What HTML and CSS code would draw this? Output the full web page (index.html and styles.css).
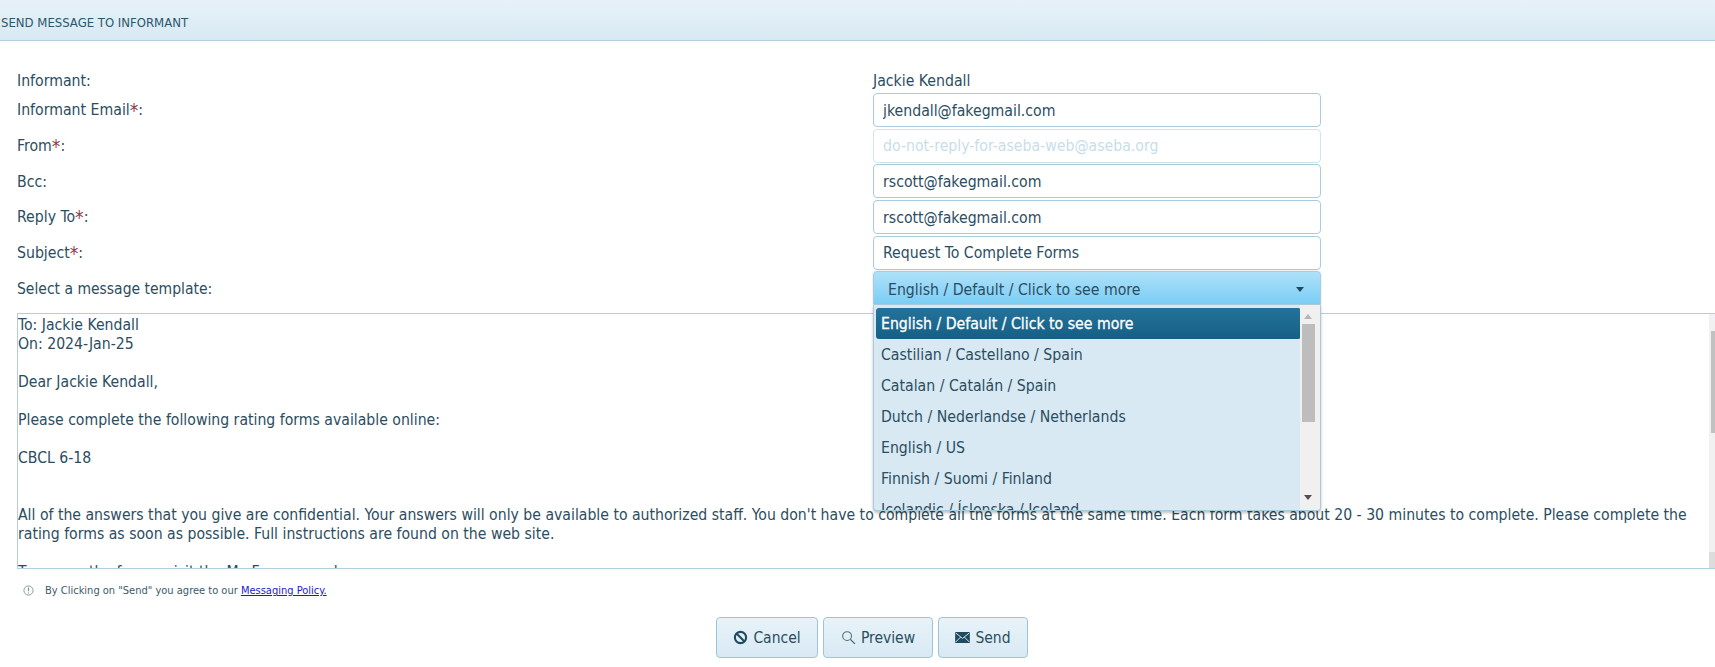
FILE: index.html
```html
<!DOCTYPE html>
<html lang="en">
<head>
<meta charset="utf-8">
<title>Send message to informant</title>
<link rel="stylesheet" href="styles.css">
</head>
<body>
<header class="titlebar">SEND MESSAGE TO INFORMANT</header>
<main class="content">
  <form class="fields">
    <div class="row row-static"><label class="lbl">Informant:</label><span class="val">Jackie Kendall</span></div>
    <div class="row"><label class="lbl">Informant Email<b>*</b>:</label><input class="inp" value="jkendall@fakegmail.com"></div>
    <div class="row"><label class="lbl">From<b>*</b>:</label><input class="inp inp-off" value="do-not-reply-for-aseba-web@aseba.org" readonly></div>
    <div class="row"><label class="lbl">Bcc:</label><input class="inp" value="rscott@fakegmail.com"></div>
    <div class="row"><label class="lbl">Reply To<b>*</b>:</label><input class="inp" value="rscott@fakegmail.com"></div>
    <div class="row"><label class="lbl">Subject<b>*</b>:</label><input class="inp" value="Request To Complete Forms"></div>
    <div class="row row-select"><label class="lbl lbl-select">Select a message template:</label>
      <div class="select">
        <div class="select-btn"><span>English / Default / Click to see more</span><i class="caret"></i></div>
        <div class="menu">
          <ul class="opts">
            <li class="opt opt-on">English / Default / Click to see more</li>
            <li class="opt">Castilian / Castellano / Spain</li>
            <li class="opt">Catalan / Catalán / Spain</li>
            <li class="opt">Dutch / Nederlandse / Netherlands</li>
            <li class="opt">English / US</li>
            <li class="opt">Finnish / Suomi / Finland</li>
            <li class="opt">Icelandic / Íslenska / Iceland</li>
          </ul>
          <div class="menu-bar"><i class="up"></i><i class="menu-thumb"></i><i class="down"></i></div>
        </div>
      </div>
    </div>
  </form>
  <div class="message">
    <div class="message-text">To: Jackie Kendall
On: 2024-Jan-25

Dear Jackie Kendall,

Please complete the following rating forms available online:

CBCL 6-18


All of the answers that you give are confidential. Your answers will only be available to authorized staff. You don't have to complete all the forms at the same time. Each form takes about 20 - 30 minutes to complete. Please complete the rating forms as soon as possible. Full instructions are found on the web site.

To access the forms, visit the My Forms panel:</div>
    <div class="message-bar"><i class="message-thumb"></i><i class="message-end"></i></div>
  </div>
  <p class="note">
    <svg class="note-ico" viewBox="0 0 12 12" width="11" height="11"><circle cx="6" cy="6" r="5" fill="none" stroke="#7f929c" stroke-width="1"/><path d="M6 2.8v4M6 8.2v1.200" stroke="#7f929c" stroke-width="1.3"/></svg>
    <span>By Clicking on "Send" you agree to our <a href="#">Messaging Policy.</a></span>
  </p>
  <div class="actions">
    <button type="button" class="btn btn-cancel"><svg viewBox="0 0 16 16" width="15" height="15"><circle cx="8" cy="8" r="6" fill="none" stroke="#1f4a60" stroke-width="2.2"/><path d="M3.8 3.8l8.4 8.4" stroke="#1f4a60" stroke-width="2.2"/></svg>Cancel</button>
    <button type="button" class="btn btn-preview"><svg viewBox="0 0 16 16" width="15" height="15"><circle cx="6.500" cy="6.500" r="4.700" fill="none" stroke="#4d6b7b" stroke-width="1.1"/><path d="M10 10l4.800 4.800" stroke="#4d6b7b" stroke-width="1.5"/></svg>Preview</button>
    <button type="button" class="btn btn-send"><svg viewBox="0 0 16 12" width="15" height="11"><rect width="16" height="12" fill="#1f4a60"/><path d="M0.500 1l7.500 6 7.500-6M0.500 11l5.500-5.500M15.500 11L10 5.500" fill="none" stroke="#e4f0f6" stroke-width="1"/></svg>Send</button>
  </div>
</main>
</body>
</html>
```

FILE: styles.css
```css
* { box-sizing: border-box; }
html, body { margin: 0; padding: 0; height: 667px; overflow: hidden; background: #fff; }
body {
  font-family: "DejaVu Sans Condensed", "DejaVu Sans", sans-serif;
  font-size: 15.7px;
  color: #2b4d5f;
}
.titlebar {
  height: 41px;
  padding: 15px 0 0 1px;
  font-size: 13px;
  line-height: 16px;
  color: #2b566d;
  background: linear-gradient(#e6f2f8, #d8e9f3);
  border-bottom: 1px solid #b5cfde;
}
.content { display: block; }
.fields { padding: 28px 0 0 17px; display: flex; flex-direction: column; }
.row {
  display: grid;
  grid-template-columns: 856px 448px;
  align-items: center;
  height: 34px;
  margin-bottom: 1.7px;
}
.row-static { height: 22px; margin-bottom: 2px; }
.row-select { margin-bottom: 0; }
.lbl { display: block; }
.lbl-select { padding-top: 2px; font-size: 15.5px; }
.lbl b { font-weight: normal; font-size: 19px; line-height: 1; vertical-align: -2px; color: #8b3b4b; }
.val { display: block; }
.inp {
  display: block;
  width: 448px;
  height: 34px;
  padding: 0 9px;
  font: inherit;
  color: #2b4d5f;
  background: #fff;
  border: 1px solid #a9cbdc;
  border-radius: 4px;
  outline: none;
}
.inp-off { color: #c7deea; border-color: #d3e4ed; }
.select { position: relative; width: 448px; height: 34px; }
.select-btn {
  height: 34px;
  padding: 2px 15px 0 14px;
  display: flex;
  align-items: center;
  justify-content: space-between;
  background: linear-gradient(#aee1f9, #7bcdf5);
  border: 1px solid #a9cbdc;
  border-radius: 4px 4px 0 0;
  box-shadow: 0 0 2px rgba(0, 0, 0, .2);
}
.caret { width: 0; height: 0; border: 4px solid transparent; border-top: 5px solid #1f4a60; border-bottom: 0; margin-right: 1px; }
.menu {
  position: absolute;
  top: 34px;
  left: 0;
  z-index: 3;
  width: 448px;
  height: 206px;
  display: flex;
  overflow: hidden;
  background: #d8e9f3;
  border: 1px solid #a9cbdc;
  border-top: 0;
  border-radius: 0 0 4px 4px;
  box-shadow: 0 2px 3px rgba(0, 0, 0, .25);
}
.opts { list-style: none; margin: 0; padding: 3px 0 0 2px; flex: 1; min-width: 0; }
.opt { height: 31px; line-height: 31px; padding-left: 5px; width: 425px; }
.opt-on {
  color: #fff;
  font-weight: 400;
  -webkit-text-stroke: .3px #fff;
  background: linear-gradient(#24739b, #155f84);
  border-radius: 3px;
}
.menu-bar {
  width: 20px;
  background: #f0f0f0;
  display: flex;
  flex-direction: column;
  align-items: center;
  padding: 0 4px 0 0;
  position: relative;
}
.up { margin-top: 9px; border: 4px solid transparent; border-bottom: 5px solid #b5b5b5; border-top: 0; }
.menu-thumb { display: block; width: 13px; height: 98px; margin-top: 5px; background: #bdbdbd; }
.down { margin-top: auto; margin-bottom: 10px; border: 4px solid transparent; border-top: 5px solid #505050; border-bottom: 0; }
.message {
  margin: 8px 0 0 17px;
  height: 256px;
  display: flex;
  overflow: hidden;
  border: solid #b5cfde;
  border-width: 1px 0 1px 1px;
}
.message-text {
  flex: 1;
  min-width: 0;
  padding: 1px 16px 0 0;
  white-space: pre-wrap;
  font-size: 15.65px;
  line-height: 19px;
  color: #2b4d5f;
}
.message-bar {
  flex: none;
  width: 6px;
  background: #f1f1f1;
  display: flex;
  flex-direction: column;
  padding: 17px 0 0 2px;
}
.message-thumb { display: block; height: 102px; background: #c1c1c1; }
.message-end { display: block; height: 16px; margin: auto 0 0 -2px; background: #dcdcdc; }
.note {
  margin: 0;
  height: 43px;
  padding: 14px 0 0 23px;
  display: flex;
  align-items: flex-start;
  gap: 11px;
  font-size: 11px;
  line-height: 16px;
  color: #3c5a6b;
}
.note-ico { margin-top: 2px; flex: none; }
.note a { color: #1a1ac8; }
.actions { display: flex; justify-content: flex-start; gap: 5px; padding: 5px 0 0 716px; }
.btn {
  height: 41px;
  display: inline-flex;
  align-items: center;
  justify-content: center;
  gap: 5px;
  padding: 0;
  font: inherit;
  font-size: 15.5px;
  color: #2b4d5f;
  background: linear-gradient(#e8f3f9, #d8e9f3);
  border: 1px solid #9cc5da;
  border-radius: 4px;
}
.btn-cancel { width: 102px; }
.btn-preview { width: 110px; }
.btn-send { width: 90px; }
```
